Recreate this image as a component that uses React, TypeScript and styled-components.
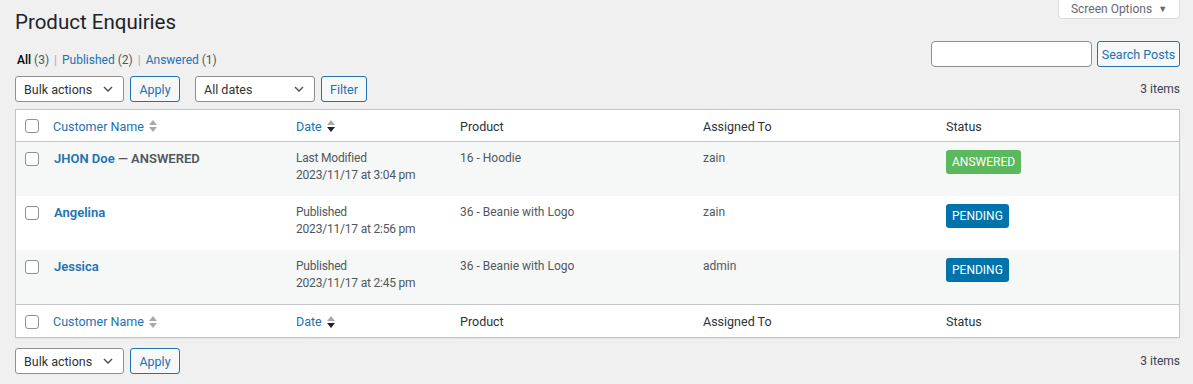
import React from 'react';
import styled, { createGlobalStyle, css } from 'styled-components';

const GlobalStyle = createGlobalStyle`
	body {
		margin: 0;
		background: #f0f0f1;
		color: #3c434a;
		font-family: Roboto, 'Noto Sans', sans-serif;
		font-size: 12.5px;
	}
	* { box-sizing: border-box; }
`;

type Enquiry = {
	name: string;
	state?: string;
	dateLabel: string;
	date: string;
	product: string;
	assigned: string;
	status: 'answered' | 'pending';
};

const rows: Enquiry[] = [
	{
		name: 'JHON Doe',
		state: 'ANSWERED',
		dateLabel: 'Last Modified',
		date: '2023/11/17 at 3:04 pm',
		product: '16 - Hoodie',
		assigned: 'zain',
		status: 'answered',
	},
	{
		name: 'Angelina',
		dateLabel: 'Published',
		date: '2023/11/17 at 2:56 pm',
		product: '36 - Beanie with Logo',
		assigned: 'zain',
		status: 'pending',
	},
	{
		name: 'Jessica',
		dateLabel: 'Published',
		date: '2023/11/17 at 2:45 pm',
		product: '36 - Beanie with Logo',
		assigned: 'admin',
		status: 'pending',
	},
];

const SortIcon = ({ active }: { active?: boolean }) => (
	<SortWrap>
		<svg width="8" height="12" viewBox="0 0 8 12">
			<path d="M0 5 L4 0 L8 5 Z" fill="#a7aaad" />
			<path d="M0 7 L4 12 L8 7 Z" fill={active ? '#1d2327' : '#a7aaad'} />
		</svg>
	</SortWrap>
);

const Chevron = () => (
	<ChevronWrap>
		<svg width="10" height="6" viewBox="0 0 10 6">
			<path d="M1 1 L5 5 L9 1" fill="none" stroke="#50575e" strokeWidth="1.5" />
		</svg>
	</ChevronWrap>
);

const Dropdown = ({ label, width }: { label: string; width: number }) => (
	<Select $width={width}>
		<span>{label}</span>
		<Chevron />
	</Select>
);

const HeadRow = () => (
	<HeadCells>
		<CheckCell>
			<Checkbox />
		</CheckCell>
		<HeadCell>
			<SortLink>
				Customer Name
				<SortIcon />
			</SortLink>
		</HeadCell>
		<HeadCell>
			<SortLink>
				Date
				<SortIcon active />
			</SortLink>
		</HeadCell>
		<HeadCell>Product</HeadCell>
		<HeadCell>Assigned To</HeadCell>
		<HeadCell>Status</HeadCell>
	</HeadCells>
);

export default function App() {
	return (
		<>
			<GlobalStyle />
			<Wrap>
				<TopBar>
					<Title>Product Enquiries</Title>
					<ScreenOptions>
						Screen Options <Arrow>▼</Arrow>
					</ScreenOptions>
				</TopBar>
				<FilterRow>
					<Views>
						<ViewItem $current>
							All <Count>(3)</Count>
						</ViewItem>
						<Sep>|</Sep>
						<ViewItem>
							Published <Count>(2)</Count>
						</ViewItem>
						<Sep>|</Sep>
						<ViewItem>
							Answered <Count>(1)</Count>
						</ViewItem>
					</Views>
					<SearchBox>
						<SearchInput />
						<Button $width={83}>Search Posts</Button>
					</SearchBox>
				</FilterRow>
				<TableNav>
					<Actions>
						<Dropdown label="Bulk actions" width={109} />
						<Button $width={50}>Apply</Button>
						<Spacer />
						<Dropdown label="All dates" width={120} />
						<Button $width={46}>Filter</Button>
					</Actions>
					<ItemCount>3 items</ItemCount>
				</TableNav>
				<Table>
					<HeadRow />
					{rows.map((row, i) => (
						<BodyRow key={row.name} $striped={i % 2 === 0}>
							<CheckCell $body>
								<Checkbox />
							</CheckCell>
							<Cell>
								<RowTitle>{row.name}</RowTitle>
								{row.state && <PostState> — {row.state}</PostState>}
							</Cell>
							<Cell $tight>
								{row.dateLabel}
								<br />
								{row.date}
							</Cell>
							<Cell>{row.product}</Cell>
							<Cell>{row.assigned}</Cell>
							<Cell>
								<Badge $status={row.status}>{row.status.toUpperCase()}</Badge>
							</Cell>
						</BodyRow>
					))}
					<FootRow>
						<HeadRow />
					</FootRow>
				</Table>
				<TableNav $bottom>
					<Actions>
						<Dropdown label="Bulk actions" width={109} />
						<Button $width={50}>Apply</Button>
					</Actions>
					<ItemCount>3 items</ItemCount>
				</TableNav>
			</Wrap>
		</>
	);
}

const Wrap = styled.div`
	padding: 0 13px 0 15px;
`;

const TopBar = styled.div`
	display: flex;
	justify-content: space-between;
	align-items: flex-start;
`;

const Title = styled.h1`
	margin: 0;
	padding: 8px 0 5px;
	font-size: 20.5px;
	line-height: 28px;
	font-weight: 400;
	color: #1d2327;
`;

const ScreenOptions = styled.div`
	width: 122px;
	height: 20px;
	margin-top: -1px;
	display: flex;
	align-items: center;
	justify-content: center;
	gap: 6px;
	background: #fff;
	border: 1px solid #dcdcde;
	border-top: none;
	border-radius: 0 0 4px 4px;
	color: #646970;
	font-size: 12px;
`;

const Arrow = styled.span`
	font-size: 9px;
	color: #646970;
`;

const FilterRow = styled.div`
	display: flex;
	justify-content: space-between;
	align-items: flex-start;
	height: 26px;
`;

const Views = styled.div`
	display: flex;
	align-items: center;
	gap: 5px;
	margin-top: 10px;
	padding-left: 2px;
	font-size: 12px;
	line-height: 18px;
`;

const ViewItem = styled.span<{ $current?: boolean }>(
	({ $current }) => css`
		color: ${$current ? '#000' : '#2271b1'};
		font-weight: ${$current ? 500 : 400};
	`,
);

const Count = styled.span`
	color: #50575e;
	font-weight: 400;
`;

const Sep = styled.span`
	color: #a7aaad;
`;

const SearchBox = styled.div`
	display: flex;
	gap: 5px;
`;

const SearchInput = styled.div`
	width: 161px;
	height: 26px;
	background: #fff;
	border: 1px solid #8c8f94;
	border-radius: 4px;
`;

const Button = styled.div<{ $width: number }>(
	({ $width }) => css`
		width: ${$width}px;
		height: 26px;
		display: flex;
		align-items: center;
		justify-content: center;
		background: #f6f7f7;
		border: 1px solid #2271b1;
		border-radius: 3px;
		color: #2271b1;
		font-size: 12.5px;
		white-space: nowrap;
	`,
);

const TableNav = styled.div<{ $bottom?: boolean }>(
	({ $bottom }) => css`
		display: flex;
		justify-content: space-between;
		align-items: center;
		margin: ${$bottom ? '10px 0 0' : '9px 0 7px'};
		height: 26px;
	`,
);

const Actions = styled.div`
	display: flex;
	gap: 6px;
`;

const Spacer = styled.div`
	width: 3px;
`;

const Select = styled.div<{ $width: number }>(
	({ $width }) => css`
		width: ${$width}px;
		height: 26px;
		padding: 0 10px 0 8px;
		display: flex;
		align-items: center;
		justify-content: space-between;
		background: #fff;
		border: 1px solid #8c8f94;
		border-radius: 3px;
		color: #2c3338;
		font-size: 12.5px;
	`,
);

const ChevronWrap = styled.span`
	display: flex;
`;

const ItemCount = styled.div`
	font-size: 12px;
	color: #3c434a;
`;

const Table = styled.div`
	background: #fff;
	border: 1px solid #c3c4c7;
	box-shadow: 0 1px 1px rgba(0, 0, 0, 0.04);
`;

const columns = css`
	display: grid;
	grid-template-columns: 27px 243px 164px 243px 243px 1fr;
`;

const HeadCells = styled.div`
	${columns};
	height: 32px;
	align-items: center;
	border-bottom: 1px solid #c3c4c7;
	padding-top: 1px;
`;

const FootRow = styled.div`
	${HeadCells} {
		border-bottom: none;
		border-top: 1px solid #c3c4c7;
		height: 33px;
	}
`;

const HeadCell = styled.div`
	padding: 0 10px;
	font-size: 12.5px;
	color: #2c3338;
`;

const SortLink = styled.span`
	display: inline-flex;
	align-items: center;
	gap: 5px;
	color: #2271b1;
`;

const SortWrap = styled.span`
	display: flex;
`;

const CheckCell = styled.div<{ $body?: boolean }>(
	({ $body }) => css`
		padding-left: 9px;
		padding-top: ${$body ? '10px' : '0'};
		display: flex;
		align-self: ${$body ? 'start' : 'center'};
	`,
);

const Checkbox = styled.span`
	display: block;
	width: 14px;
	height: 14px;
	background: #fff;
	border: 1px solid #8c8f94;
	border-radius: 3px;
`;

const BodyRow = styled.div<{ $striped?: boolean }>(
	({ $striped }) => css`
		${columns};
		height: 54px;
		align-items: start;
		background: ${$striped ? '#f6f7f7' : '#fff'};
	`,
);

const Cell = styled.div<{ $tight?: boolean }>(
	({ $tight }) => css`
		padding: 8px 10px;
		line-height: 17px;
		font-size: 12px;
		color: #50575e;
		letter-spacing: ${$tight ? '-0.2px' : 'normal'};
	`,
);

const RowTitle = styled.span`
	margin-left: 1px;
	font-size: 13px;
	font-weight: 600;
	color: #2271b1;
`;

const PostState = styled.span`
	font-size: 13px;
	font-weight: 600;
	color: #50575e;
`;

const Badge = styled.span<{ $status: 'answered' | 'pending' }>(
	({ $status }) => css`
		display: inline-block;
		padding: 0 6px;
		line-height: 24px;
		border-radius: 3px;
		font-size: 12px;
		color: #fff;
		background: ${$status === 'answered' ? '#5cb85c' : '#0073aa'};
	`,
);
